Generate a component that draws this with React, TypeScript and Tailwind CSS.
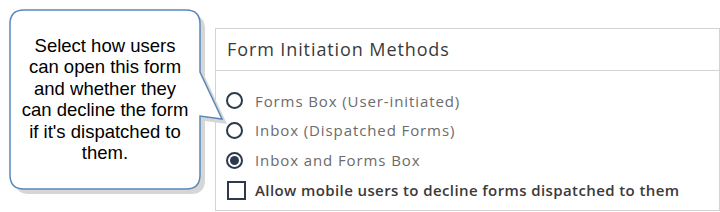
import React from "react";

function Callout() {
  const d =
    "M24 10 H186 Q200 10 200 24 V72 L222 119 L200 116 V175 Q200 189 186 189 H24 Q10 189 10 175 V24 Q10 10 24 10 Z";
  return (
    <svg className="absolute left-0 top-0" width="230" height="212" viewBox="0 0 230 212">
      <path d={d} transform="translate(5,5)" fill="#d6d6d6" />
      <path d={d} fill="#ffffff" stroke="#5a88bb" strokeWidth="1.5" strokeLinejoin="miter" />
    </svg>
  );
}

function Radio({ checked, label }: { checked?: boolean; label: string }) {
  return (
    <div className="flex items-center h-[29.7px]">
      <span className="w-[17px] h-[17px] rounded-full border-2 border-[#2b3a4e] flex items-center justify-center ml-[10px]">
        {checked && <span className="w-[9px] h-[9px] rounded-full bg-[#2b3a4e]" />}
      </span>
      <span className="ml-[12px] text-[15px] tracking-[0.9px] text-[#6b6b6b]">{label}</span>
    </div>
  );
}

export default function App() {
  return (
    <div className="w-[720px] h-[212px] bg-white flex overflow-hidden">
      <div className="relative w-[215px] h-[212px] shrink-0 z-10">
        <Callout />
        <div
          className="absolute left-[10px] top-[10px] w-[190px] pt-[25px] text-center text-black text-[18.5px] leading-[21.4px]"
          style={{ fontFamily: "'Liberation Sans', Arial, sans-serif" }}
        >
          Select how users
          <br />
          can open this form
          <br />
          and whether they
          <br />
          can decline the form
          <br />
          if it's dispatched to
          <br />
          them.
        </div>
      </div>
      <div
        className="mt-[28px] w-[505px] h-[183px] border border-[#d3d3d3] flex flex-col"
        style={{ fontFamily: "'Open Sans', sans-serif" }}
      >
        <div className="h-[42px] border-b border-[#d3d3d3] flex items-center pl-[11px] text-[18px] tracking-[0.9px] text-[#3a3a3a]">
          Form Initiation Methods
        </div>
        <div className="pt-[15px] flex flex-col">
          <Radio label="Forms Box (User-initiated)" />
          <Radio label="Inbox (Dispatched Forms)" />
          <Radio checked label="Inbox and Forms Box" />
          <div className="flex items-center h-[30px]">
            <span className="w-[19px] h-[19px] border-2 border-[#2b3a4e] ml-[11px]" />
            <span className="ml-[9px] text-[15px] tracking-[0.4px] font-semibold text-[#3a3a3a]">
              Allow mobile users to decline forms dispatched to them
            </span>
          </div>
        </div>
      </div>
    </div>
  );
}
